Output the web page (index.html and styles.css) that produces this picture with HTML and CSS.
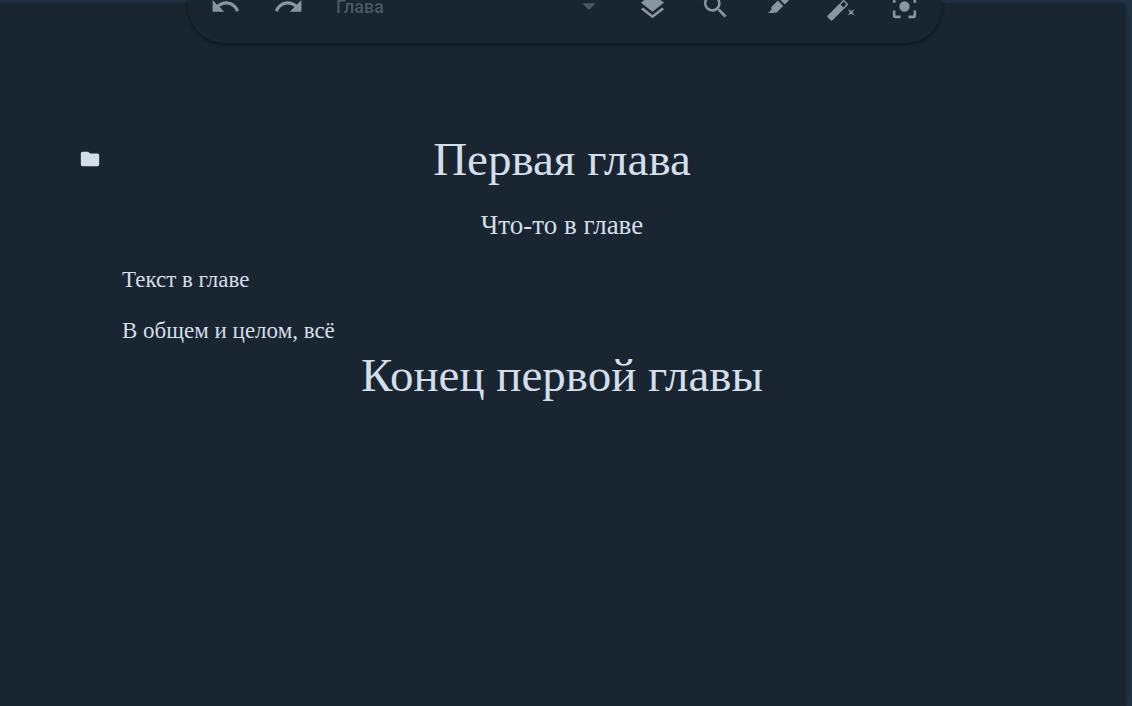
FILE: index.html
```html
<!DOCTYPE html>
<html lang="ru">

<head>
    <meta charset="UTF-8">
    <meta name="viewport" content="width=device-width, initial-scale=1.0">
    <title>Первая глава</title>
    <link rel="stylesheet" href="styles.css">
</head>

<body>
    <div class="toolbar">
        <button class="tool" aria-label="Отменить">
            <svg viewBox="0 0 24 24"><path d="M12.5,8C9.85,8 7.45,9 5.6,10.6L2,7V16H11L7.38,12.38C8.77,11.22 10.54,10.5 12.5,10.5C16.04,10.5 19.05,12.81 20.1,16L22.47,15.22C21.08,11.03 17.15,8 12.5,8Z"/></svg>
        </button>
        <button class="tool" aria-label="Повторить">
            <svg viewBox="0 0 24 24"><path d="M18.4,10.6C16.55,9 14.15,8 11.5,8C6.85,8 2.92,11.03 1.54,15.22L3.9,16C4.95,12.81 7.95,10.5 11.5,10.5C13.45,10.5 15.23,11.22 16.62,12.38L13,16H22V7L18.4,10.6Z"/></svg>
        </button>
        <div class="style-select">
            <select aria-label="Стиль">
                <option>Глава</option>
            </select>
            <svg viewBox="0 0 24 24"><path d="M7,10L12,15L17,10H7Z"/></svg>
        </div>
        <button class="tool" aria-label="Слои">
            <svg viewBox="0 0 24 24"><path d="M12,16L19.36,10.27L21,9L12,2L3,9L4.63,10.27M12,18.54L4.62,12.81L3,14.07L12,21.07L21,14.07L19.37,12.8L12,18.54Z"/></svg>
        </button>
        <button class="tool" aria-label="Поиск">
            <svg viewBox="0 0 24 24"><path d="M9.5,3A6.5,6.5 0 0,1 16,9.5C16,11.11 15.41,12.59 14.44,13.73L14.71,14H15.5L20.5,19L19,20.5L14,15.5V14.71L13.73,14.44C12.59,15.41 11.11,16 9.5,16A6.5,6.5 0 0,1 3,9.5A6.5,6.5 0 0,1 9.5,3M9.5,5C7,5 5,7 5,9.5C5,12 7,14 9.5,14C12,14 14,12 14,9.5C14,7 12,5 9.5,5Z"/></svg>
        </button>
        <button class="tool" aria-label="Выделение">
            <svg viewBox="0 0 24 24"><path d="M4,17L6.75,14.25L6.72,14.23C6.14,13.64 6.14,12.69 6.72,12.11L11.46,7.37L15.7,11.61L10.96,16.35C10.39,16.93 9.46,16.93 8.87,16.37L8.24,17H4M15.91,2.91C16.5,2.33 17.45,2.33 18.03,2.91L20.16,5.03C20.74,5.62 20.74,6.57 20.16,7.16L16.86,10.45L12.62,6.21L15.91,2.91Z"/></svg>
        </button>
        <button class="tool" aria-label="Автоформат">
            <svg viewBox="0 0 24 24"><path d="M7.5,5.6L5,7L6.4,4.5L5,2L7.5,3.4L10,2L8.6,4.5L10,7L7.5,5.6M19.5,15.4L22,14L20.6,16.5L22,19L19.5,17.6L17,19L18.4,16.5L17,14L19.5,15.4M22,2L20.6,4.5L22,7L19.5,5.6L17,7L18.4,4.5L17,2L19.5,3.4L22,2M13.34,12.78L15.78,10.34L13.66,8.22L11.22,10.66L13.34,12.78M14.37,7.29L16.71,9.63C17.1,10 17.1,10.65 16.71,11.04L5.04,22.71C4.65,23.1 4,23.1 3.63,22.71L1.29,20.37C0.9,20 0.9,19.35 1.29,18.96L12.96,7.29C13.35,6.9 14,6.9 14.37,7.29Z"/></svg>
        </button>
        <button class="tool" aria-label="Фокус">
            <svg viewBox="0 0 24 24"><path d="M12,8A4,4 0 0,0 8,12A4,4 0 0,0 12,16A4,4 0 0,0 16,12A4,4 0 0,0 12,8M5,15H3V19A2,2 0 0,0 5,21H9V19H5M5,5H9V3H5A2,2 0 0,0 3,5V9H5M19,3H15V5H19V9H21V5A2,2 0 0,0 19,3M19,19H15V21H19A2,2 0 0,0 21,19V15H19"/></svg>
        </button>
    </div>

    <main class="page">
        <div class="chapter">
            <svg class="folder" viewBox="0 0 24 24"><path d="M10,4H4C2.89,4 2,4.89 2,6V18A2,2 0 0,0 4,20H20A2,2 0 0,0 22,18V8C22,6.89 21.1,6 20,6H12L10,4Z"/></svg>
            <h1>Первая глава</h1>
        </div>
        <h2>Что-то в главе</h2>
        <p>Текст в главе</p>
        <p>В общем и целом, всё</p>
        <h1>Конец первой главы</h1>
    </main>
</body>

</html>
```
FILE: styles.css
```css
* {
    box-sizing: border-box;
}

body {
    margin: 0;
    padding: 3px 6px 0 0;
    min-height: 100vh;
    display: flex;
    background: #203346;
    color: #d3deea;
    font-family: "Liberation Serif", "Times New Roman", serif;
}

/* the toolbar floats over the page, partly slid out of view */
.toolbar {
    position: fixed;
    top: -31px;
    left: 0;
    right: 2px;
    margin: 0 auto;
    width: 754px;
    max-width: 100%;
    height: 74px;
    padding: 0 22px;
    display: flex;
    align-items: center;
    gap: 32px;
    background: rgba(25, 37, 48, 0.8);
    border-radius: 37px;
    box-shadow: 0 2px 4px rgba(0, 0, 0, 0.4);
}

.tool {
    display: flex;
    padding: 0;
    border: none;
    background: none;
    color: #8a95a2;
    cursor: pointer;
}

.tool svg {
    width: 31px;
    height: 31px;
    fill: currentColor;
}

.style-select {
    flex: 1;
    display: flex;
    align-items: center;
    color: #4b5967;
}

.style-select select {
    flex: 1;
    appearance: none;
    padding: 0;
    border: none;
    outline: none;
    background: none;
    color: inherit;
    font: 500 18px Roboto, sans-serif;
}

.style-select svg {
    width: 32px;
    height: 32px;
    fill: currentColor;
}

.page {
    flex: 1;
    padding: 128px 124px 0 122px;
    background: #192530;
    border-radius: 0 6px 0 0;
    box-shadow: 0 0 4px rgba(0, 0, 0, 0.3);
}

.chapter {
    position: relative;
}

.folder {
    position: absolute;
    top: 17px;
    left: -43px;
    width: 22px;
    height: 22px;
    fill: currentColor;
}

h1,
h2,
p {
    margin: 0;
    font-weight: normal;
}

h1 {
    font-size: 47px;
    line-height: 56px;
    text-align: center;
}

h2 {
    margin: 20px 0 22px;
    font-size: 27px;
    line-height: 36px;
    text-align: center;
}

p {
    font-size: 23px;
    line-height: 30px;
}

p + p {
    margin: 21px 0 1px;
}
```
